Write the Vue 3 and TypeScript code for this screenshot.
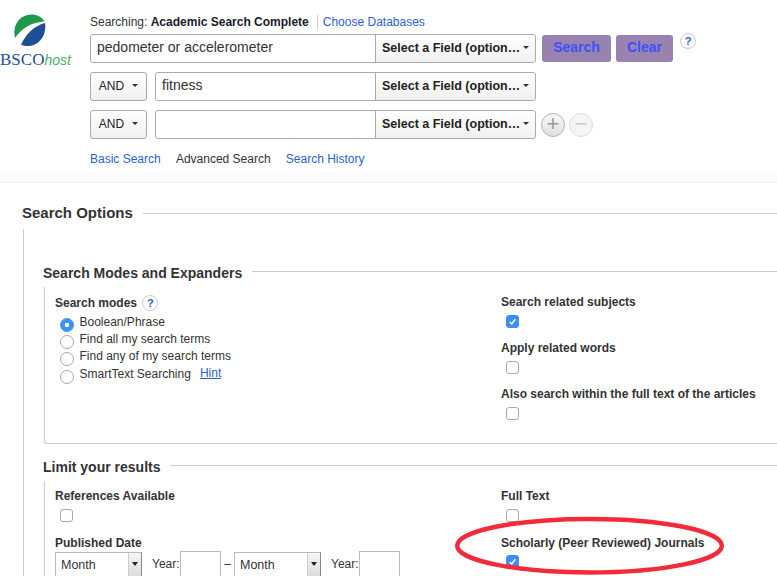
<template>
  <div class="page">
    <header class="top">
      <div class="logo">
        <svg width="32" height="33" viewBox="0 0 32 33">
          <path d="M1 24 C-2 12 5 1 17 0.5 C23 0.5 28 3 30.5 7.5 C18 8 8 14 1 24 Z" fill="#1f9a4b" />
          <path d="M31 9 C33 21 25 32 14 32 C11 32 9 31.500 7 30.500 C12 20 20 12 31 9 Z" fill="#1d4f96" />
        </svg>
        <div class="logo-text">BSCO<i>host</i></div>
      </div>

      <div class="search">
        <div class="searching">
          <span>Searching: <b>Academic Search Complete</b></span>
          <a class="choose">Choose Databases</a>
        </div>

        <div v-for="(row, i) in rows" :key="i" class="row">
          <button v-if="i > 0" class="bool">AND <span class="caret"></span></button>
          <div class="field" :class="{ first: i === 0 }">
            <div class="term">{{ row }}</div>
            <div class="select">Select a Field (option… <span class="caret"></span></div>
          </div>
          <template v-if="i === 0">
            <button class="action search-btn">Search</button>
            <button class="action clear-btn">Clear</button>
            <span class="help top-help">?</span>
          </template>
          <template v-if="i === 2">
            <span class="round plus">+</span>
            <span class="round minus">−</span>
          </template>
        </div>

        <nav class="tabs">
          <a>Basic Search</a>
          <span>Advanced Search</span>
          <a>Search History</a>
        </nav>
      </div>
    </header>

    <main class="options">
      <h2 class="legend big"><span>Search Options</span></h2>
      <div class="outer">
        <h3 class="legend sub"><span>Search Modes and Expanders</span></h3>
        <div class="panel modes">
          <div>
            <div class="label">Search modes <span class="help">?</span></div>
            <div v-for="(m, i) in modes" :key="m" class="mode">
              <span class="radio" :class="{ on: i === 0 }"></span>
              <span>{{ m }}</span>
              <a v-if="i === 3" class="hint">Hint</a>
            </div>
          </div>
          <div class="expanders">
            <div v-for="(e, i) in expanders" :key="e" class="check-item">
              <div class="label">{{ e }}</div>
              <span class="check" :class="{ on: i === 0 }"><svg v-if="i === 0" viewBox="0 0 12 12"><path d="M3 6.500 L5.200 8.700 L9 3.500" /></svg></span>
            </div>
          </div>
        </div>

        <h3 class="legend sub limit"><span>Limit your results</span></h3>
        <div class="panel limits">
          <div>
            <div class="label">References Available</div>
            <span class="check"></span>
            <div class="label date-label">Published Date</div>
            <div class="date-row">
              <div class="month">Month<span class="spin"></span></div>
              <span class="year">Year:</span><div class="year-box"></div>
              <span class="dash">–</span>
              <div class="month">Month<span class="spin"></span></div>
              <span class="year">Year:</span><div class="year-box"></div>
            </div>
          </div>
          <div>
            <div class="label">Full Text</div>
            <span class="check"></span>
            <div class="label date-label">Scholarly (Peer Reviewed) Journals</div>
            <span class="check on scholarly"><svg viewBox="0 0 12 12"><path d="M3 6.500 L5.200 8.700 L9 3.500" /></svg></span>
          </div>
        </div>
      </div>
    </main>

    <svg class="circle" width="777" height="576" viewBox="0 0 777 576">
      <ellipse cx="589.500" cy="545.700" rx="132.300" ry="26.800" />
    </svg>
  </div>
</template>

<script setup lang="ts">
const rows: string[] = ['pedometer or accelerometer', 'fitness', '']
const modes: string[] = [
  'Boolean/Phrase',
  'Find all my search terms',
  'Find any of my search terms',
  'SmartText Searching'
]
const expanders: string[] = [
  'Search related subjects',
  'Apply related words',
  'Also search within the full text of the articles'
]
</script>

<style>
html, body {
  margin: 0;
  height: 576px;
  overflow: hidden;
  background: #fff;
}
</style>

<style scoped>
.page {
  position: relative;
  width: 777px;
  height: 576px;
  overflow: hidden;
  font-family: "Liberation Sans", Arial, sans-serif;
  font-size: 12px;
  color: #333;
}
a {
  color: #2a5fd0;
}

.top {
  display: flex;
  height: 182px;
  background: linear-gradient(#fff 174px, #fbfbfb 174px);
  border-bottom: 1px solid #ececec;
}
.logo {
  width: 90px;
  padding-top: 14px;
  flex: none;
}
.logo svg {
  display: block;
  margin-left: 14px;
}
.logo-text {
  margin-top: 4px;
  font-family: "Liberation Serif", serif;
  font-size: 17px;
  line-height: 18px;
  color: #1d4f96;
  white-space: nowrap;
}
.logo-text i {
  font-family: "Liberation Sans", sans-serif;
  font-size: 14px;
  color: #4fae6b;
}

.search {
  padding-top: 14px;
}
.searching {
  display: flex;
  align-items: center;
  height: 15px;
  margin-bottom: 5px;
  white-space: nowrap;
}
.searching b {
  color: #1a1a2a;
}
.choose {
  margin-left: 8px;
  padding-left: 5px;
  border-left: 1px solid #ccc;
}

.row {
  display: flex;
  align-items: flex-start;
  height: 29px;
  margin-bottom: 9px;
}
.bool {
  display: flex;
  align-items: center;
  justify-content: center;
  gap: 8px;
  width: 57px;
  height: 29px;
  margin: 0 8px 0 0;
  padding: 0 0 2px;
  background: linear-gradient(#fff, #f0f0f0);
  border: 1px solid #aaa;
  border-radius: 3px;
  font: 12px "Liberation Sans", sans-serif;
  color: #222;
}
.field {
  display: flex;
  width: 381px;
  height: 29px;
  box-sizing: border-box;
  border: 1px solid #aaa;
  border-radius: 3px;
}
.field.first {
  width: 446px;
}
.term {
  flex: 1;
  padding-left: 6px;
  font-size: 14px;
  line-height: 25px;
  color: #333;
}
.select {
  display: flex;
  align-items: center;
  justify-content: space-between;
  width: 160px;
  box-sizing: border-box;
  padding: 0 6px 2px;
  border-left: 1px solid #aaa;
  border-radius: 0 3px 3px 0;
  background: linear-gradient(#fff, #f0f0f0);
  font-size: 12.500px;
  font-weight: bold;
  color: #222;
  white-space: nowrap;
}
.caret {
  display: inline-block;
  width: 0;
  height: 0;
  border-left: 3px solid transparent;
  border-right: 3px solid transparent;
  border-top: 3px solid #333;
}

.action {
  height: 27px;
  margin: 1px 0 0 6px;
  padding: 0 0 3px;
  background: #9883b0;
  border: 0;
  border-radius: 3px;
  font: bold 14px "Liberation Sans", sans-serif;
  color: #3e50f8;
}
.search-btn {
  width: 69px;
}
.clear-btn {
  width: 57px;
  margin-left: 5px;
}
.help {
  display: inline-block;
  width: 14px;
  height: 14px;
  border: 1px solid #ccc;
  border-radius: 50%;
  background: #fff;
  color: #2a5fd0;
  font-size: 11px;
  font-weight: bold;
  line-height: 14px;
  text-align: center;
  vertical-align: middle;
}
.top-help {
  margin: -1px 0 0 7px;
}
.round {
  width: 22px;
  height: 22px;
  margin-top: 3px;
  border: 1px solid #b5b5b5;
  border-radius: 50%;
  background: linear-gradient(#fafafa, #dedede);
  color: #999;
  font-size: 22px;
  line-height: 20px;
  text-align: center;
}
.plus {
  margin-left: 5px;
}
.minus {
  margin-left: 4px;
  border-color: #ddd;
  background: #f5f5f5;
  color: #ccc;
}

.tabs {
  display: flex;
  gap: 15.200px;
  margin-top: 13px;
  line-height: 14px;
  white-space: nowrap;
}
.tabs span {
  color: #333;
}

.options {
  padding: 21px 0 0 22px;
}
.legend {
  display: flex;
  align-items: center;
  margin: 0;
  font-size: 14px;
  font-weight: bold;
  line-height: 18px;
  color: #333;
  white-space: nowrap;
}
.legend::after {
  content: "";
  flex: 1;
  height: 1px;
  margin-left: 10px;
  background: #ccc;
}
.legend.sub::after {
  transform: translateY(-2px);
}
.legend.big {
  height: 18px;
  font-size: 15px;
}
.outer {
  margin: 7px 0 0 1px;
  padding: 35px 0 0 19px;
  border-left: 1px solid #ccc;
}
.panel {
  display: grid;
  grid-template-columns: 446px 1fr;
  margin: 5px 0 0 1px;
  padding: 9px 0 0 10px;
  border-left: 1px solid #ccc;
  border-radius: 0 0 0 3px;
}
.modes {
  height: 147px;
  border-bottom: 1px solid #ccc;
}
.label {
  font-weight: bold;
  line-height: 14px;
  color: #333;
}
.label .help {
  margin-left: 2px;
  margin-top: -1px;
}
.label + .mode {
  margin-top: 1.600px;
}
.mode {
  display: flex;
  align-items: center;
  height: 17.400px;
  margin-left: 5px;
  color: #333;
}
.radio {
  width: 12px;
  height: 12px;
  margin: 6px 5.500px 0 0;
  border: 1px solid #aaa;
  border-radius: 50%;
  background: #fff;
  flex: none;
}
.radio.on {
  border-color: #3d94f6;
  background: radial-gradient(circle, #fff 0 2px, #3d94f6 2.500px);
}
.hint {
  margin-left: 9px;
  margin-top: -1px;
  text-decoration: underline;
}
.expanders {
  margin-top: -1px;
}
.check-item {
  height: 46px;
}
.check {
  display: block;
  width: 11px;
  height: 11px;
  margin: 6px 0 0 5px;
  border: 1px solid #aaa;
  border-radius: 3px;
  background: #fff;
}
.check.on {
  border-color: #3d8ef0;
  background: #3d8ef0;
}
.check.scholarly {
  margin-top: 5px;
}
.check svg {
  display: block;
  fill: none;
  stroke: #fff;
  stroke-width: 1.600;
}
.limit {
  margin: 14px 0 0;
}
.limits {
  margin-top: 5px;
  padding-top: 8px;
  min-height: 90px;
}
.date-label {
  margin-top: 14px;
}
.date-row {
  display: flex;
  align-items: flex-start;
  width: 400px;
  margin-top: 2px;
}
.month {
  position: relative;
  width: 87px;
  height: 25px;
  flex: none;
  box-sizing: border-box;
  border: 1px solid #bbb;
  border-right-color: #888;
  padding-left: 5px;
  font-size: 12.500px;
  line-height: 25px;
  color: #333;
}
.spin {
  position: absolute;
  top: 0;
  right: 0;
  width: 12px;
  height: 23px;
  background: linear-gradient(#f5f5f5, #ddd);
  border-left: 1px solid #ccc;
  border-bottom: 1px solid #888;
}
.spin::after {
  content: "";
  position: absolute;
  top: 9px;
  left: 3px;
  border-left: 3px solid transparent;
  border-right: 3px solid transparent;
  border-top: 4px solid #222;
}
.year {
  flex: none;
  width: 28px;
  margin-left: 10px;
  line-height: 24px;
}
.year-box {
  width: 39px;
  height: 26px;
  flex: none;
  margin-top: -1px;
  border: 1px solid #bbb;
}
.dash {
  flex: none;
  width: 13px;
  text-align: center;
  line-height: 24px;
}

.circle {
  position: absolute;
  top: 0;
  left: 0;
  pointer-events: none;
}
.circle ellipse {
  fill: none;
  stroke: #f32a3a;
  stroke-width: 4.500;
}
</style>
